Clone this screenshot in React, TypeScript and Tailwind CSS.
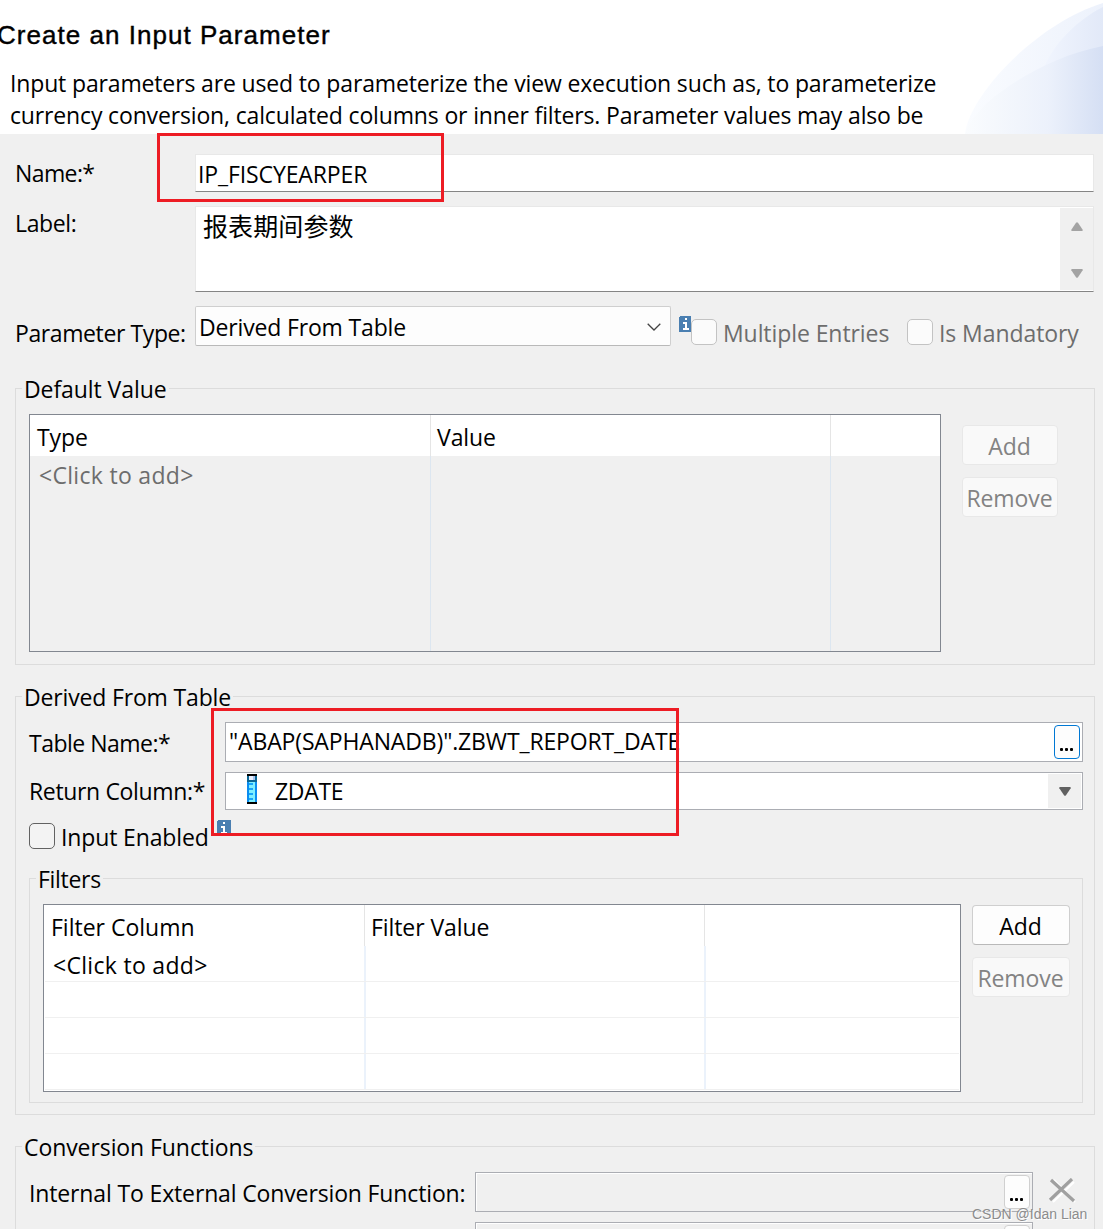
import type { ReactNode } from "react";

interface ChildrenProps {
	children?: ReactNode;
	className?: string;
}

function Text({ children, className = "" }: ChildrenProps) {
	return (
		<span className={`block whitespace-nowrap leading-[30px] ${className}`}>
			{children}
		</span>
	);
}

interface GroupProps {
	title: string;
	legendClass?: string;
	className?: string;
	children: ReactNode;
}

function Group({
	title,
	legendClass = "ml-[6px]",
	className = "",
	children,
}: GroupProps) {
	return (
		<fieldset className={`min-w-0 border border-[#dcdcdc] ${className}`}>
			<legend className={`h-[33px] px-[2px] pt-[2px] ${legendClass}`}>
				<Text>{title}</Text>
			</legend>
			{children}
		</fieldset>
	);
}

function Checkbox({ disabled = false }: { disabled?: boolean }) {
	return (
		<span
			className={`block h-[26px] w-[26px] shrink-0 rounded-[5px] border ${
				disabled
					? "border-[#c3c3c3] bg-[#fbfbfb]"
					: "border-[#626262] bg-[#f3f3f3]"
			}`}
		/>
	);
}

function InfoIcon({ className = "" }: { className?: string }) {
	return (
		<div className={`h-4 shrink-0 overflow-hidden ${className}`}>
			<svg
				viewBox="0 0 14 16"
				className="h-4 w-[14px] max-w-none"
				shapeRendering="crispEdges"
			>
				<rect width="14" height="16" rx="2" fill="#4a7fb1" />
				<path d="M6 2h2v2H6zM4 6h4v6h2v2H4v-2h2V8H4z" fill="#fff" />
			</svg>
		</div>
	);
}

function ColumnIcon() {
	return (
		<svg
			viewBox="0 0 10 30"
			className="h-[30px] w-[10px]"
			shapeRendering="crispEdges"
		>
			<rect width="10" height="30" fill="#0a8df0" />
			<rect width="10" height="2" fill="#000" />
			<rect y="2" width="10" height="6" fill="#0b6694" />
			<rect x="2" y="2" width="4" height="4" fill="#e8f0ff" />
			<rect x="6" y="2" width="2" height="4" fill="#a9c4f0" />
			<rect x="2" y="8" width="6" height="20" fill="#7fefff" />
			<path
				d="M2 9h4v2H2zM2 14h4v2H2zM2 19h4v2H2zM2 24h4v2H2z"
				fill="#18a4fa"
			/>
			<rect y="28" width="10" height="2" fill="#000" />
		</svg>
	);
}

function Arrow({ up = false }: { up?: boolean }) {
	return (
		<svg viewBox="0 0 12 9" className="h-[9px] w-3">
			<path
				d={
					up
						? "M1 9Q0 9 .3 7.7L5 .8Q6-.4 7 .8L11.7 7.7Q12 9 11 9z"
						: "M1 0Q0 0 .3 1.3L5 8.2Q6 9.4 7 8.2L11.7 1.3Q12 0 11 0z"
				}
				fill="currentColor"
			/>
		</svg>
	);
}

function Button({
	children,
	disabled = false,
}: ChildrenProps & { disabled?: boolean }) {
	return (
		<button
			type="button"
			className={`flex h-10 items-center justify-center rounded border pr-px pt-px ${
				disabled
					? "border-[#e8e8e8] bg-[#f9f9f9] text-[#838383]"
					: "border-[#cfcfcf] border-b-[#b9b9b9] bg-[#fdfdfd] text-black"
			}`}
		>
			<Text>{children}</Text>
		</button>
	);
}

function Dots({ className }: { className: string }) {
	return (
		<button
			type="button"
			className={`flex h-[34px] w-[26px] items-end justify-center gap-[2px] rounded-[4px] border bg-[#fdfdfd] pb-[7px] pr-px ${className}`}
		>
			<i className="h-[3px] w-[3px] rounded-[1px] bg-black" />
			<i className="h-[3px] w-[3px] rounded-[1px] bg-black" />
			<i className="h-[3px] w-[3px] rounded-[1px] bg-black" />
		</button>
	);
}

function Header() {
	return (
		<header className="flex h-[134px] justify-between bg-white">
			<div>
				<h1 className="-ml-[3px] mt-[19px] h-8 whitespace-nowrap font-['Liberation_Sans',sans-serif] text-[26px] leading-8 tracking-[1.03px] [-webkit-text-stroke:0.4px_black]">
					Create an Input Parameter
				</h1>
				<div className="ml-[10px] mt-[17px] flex flex-col gap-[2px] tracking-[-0.15px]">
					<Text>
						Input parameters are used to parameterize the view execution such as,
						to parameterize
					</Text>
					<Text>
						currency conversion, calculated columns or inner filters. Parameter
						values may also be
					</Text>
				</div>
			</div>
			<svg viewBox="0 0 138 134" className="h-[134px] w-[138px] shrink-0">
				<defs>
					<linearGradient id="sky" x1="0" x2="1">
						<stop offset="0" stopColor="#fafcff" />
						<stop offset="1" stopColor="#edf2fc" />
					</linearGradient>
					<linearGradient id="mid" x1="0" x2="1">
						<stop offset="0" stopColor="#f1f5fe" />
						<stop offset="1" stopColor="#e2e9f8" />
					</linearGradient>
					<linearGradient id="low" x1="0" x2="1">
						<stop offset="0" stopColor="#fafcfe" />
						<stop offset="0.6" stopColor="#ecf1fb" />
						<stop offset="1" stopColor="#d5dff4" />
					</linearGradient>
				</defs>
				<path d="M0 134C4 96 70 24 138 3V134z" fill="url(#sky)" />
				<path d="M78 70C88 44 112 20 138 7V70z" fill="url(#mid)" />
				<path d="M0 134Q3 122 22 103C50 79 92 55 138 46V134z" fill="url(#low)" />
			</svg>
		</header>
	);
}

function DefaultValueTable() {
	return (
		<div className="h-[238px] w-[912px] border border-[#828790]">
			<div className="grid h-[41px] grid-cols-[401px_400px_1fr] bg-white">
				<div className="border-r border-[#e5e5e5] pl-[7px] pt-[7px]">
					<Text>Type</Text>
				</div>
				<div className="border-r border-[#e5e5e5] pl-[6px] pt-[7px]">
					<Text>Value</Text>
				</div>
				<div />
			</div>
			<div className="grid h-[195px] grid-cols-[401px_400px_1fr]">
				<div className="border-r border-[#dce6f0] pl-[9px] pt-[4px] text-[#6d6d6d]">
					<Text className="tracking-[0.3px]">&lt;Click to add&gt;</Text>
				</div>
				<div className="border-r border-[#dce6f0]" />
				<div />
			</div>
		</div>
	);
}

const filterRows = ["<Click to add>", "", "", ""];

function FilterTable() {
	return (
		<div className="h-[188px] w-[918px] border border-[#828790] bg-white">
			<div className="grid h-[41px] grid-cols-[321px_340px_1fr]">
				<div className="border-r border-[#e5e5e5] pl-[7px] pt-[7px]">
					<Text className="tracking-normal">Filter Column</Text>
				</div>
				<div className="border-r border-[#e5e5e5] pl-[6px] pt-[7px]">
					<Text>Filter Value</Text>
				</div>
				<div />
			</div>
			{filterRows.map((row, i) => (
				<div
					key={i}
					className="mx-px grid h-9 grid-cols-[321px_340px_1fr] border-b border-[#f0f0f0]"
				>
					<div className="border-r-2 border-[#ebf2fb] pl-[8px] pt-[4px]">
						<Text className="tracking-[0.3px]">{row}</Text>
					</div>
					<div className="border-r-2 border-[#ebf2fb]" />
					<div />
				</div>
			))}
		</div>
	);
}

export default function App() {
	return (
		<div className="relative h-[1229px] w-[1103px] overflow-hidden bg-[#f0f0f0] font-['Open_Sans','Noto_Sans_CJK_SC',sans-serif] text-[23px] tracking-[-0.08px] text-black">
			<Header />

			<main className="pl-[15px] pr-[8px]">
				<div className="flex pt-5">
					<Text className="w-[180px] pt-1 tracking-[-0.6px]">Name:*</Text>
					<div className="h-[38px] w-[899px] border border-[#e8e8e8] border-b-[#858585] bg-white pl-[2px] pt-[4px]">
						<Text className="tracking-[-0.12px]">IP_FISCYEARPER</Text>
					</div>
				</div>

				<div className="mt-[14px] flex">
					<Text className="w-[180px] pt-[2px] tracking-[-0.35px]">Label:</Text>
					<div className="flex h-[86px] w-[899px] justify-between border border-[#e8e8e8] border-b-[#858585] bg-white py-px pl-[7px]">
						<Text className="pt-[2px] font-['Noto_Sans_CJK_SC',sans-serif] text-[25px] tracking-[0.1px]">
							报表期间参数
						</Text>
						<div className="flex w-[33px] flex-col items-center justify-between bg-[#f0f0f0] pb-[12px] pt-[14px] text-[#a3a3a3]">
							<Arrow up />
							<Arrow />
						</div>
					</div>
				</div>

				<div className="mt-[14px] flex h-10">
					<Text className="w-[180px] pt-3 tracking-[-0.4px]">
						Parameter Type:
					</Text>
					<div className="flex w-[476px] justify-between rounded-[2px] border border-[#cfcfcf] border-b-[#b9b9b9] bg-[#fdfdfd] pl-[3px] pr-[9px] pt-[5px]">
						<Text className="tracking-[-0.16px]">Derived From Table</Text>
						<svg
							viewBox="0 0 14 8"
							className="mt-[11px] h-2 w-[14px]"
							fill="none"
							stroke="#444"
							strokeWidth="1.3"
						>
							<path d="M.7.8 7 7 13.3.8" />
						</svg>
					</div>
					<InfoIcon className="ml-[8px] mt-[10px] w-3" />
					<div className="flex pt-[13px] text-[#6d6d6d]">
						<Checkbox disabled />
						<Text className="-mt-px ml-[6px] w-[184px]">Multiple Entries</Text>
						<Checkbox disabled />
						<Text className="-mt-px ml-[6px]">Is Mandatory</Text>
					</div>
				</div>

				<Group title="Default Value" className="mt-[26px] h-[293px] w-[1080px]">
					<div className="flex gap-[21px] pl-[13px] pt-[9px]">
						<DefaultValueTable />
						<div className="flex w-24 flex-col gap-3 pt-[11px]">
							<Button disabled>Add</Button>
							<Button disabled>Remove</Button>
						</div>
					</div>
				</Group>

				<Group
					title="Derived From Table"
					legendClass="-ml-[7px] tracking-[-0.16px]"
					className="mt-[15px] h-[435px] w-[1080px] pl-[13px]"
				>
					<div className="flex pt-[9px]">
						<Text className="w-[196px] pt-[6px] tracking-[-0.5px]">
							Table Name:*
						</Text>
						<div className="flex h-10 w-[858px] justify-between border border-[#abadb3] bg-white pl-[3px] pr-[2px] pt-[2px]">
							<Text className="pt-px tracking-[-0.14px]">
								&quot;ABAP(SAPHANADB)&quot;.ZBWT_REPORT_DATE
							</Text>
							<Dots className="border-[#0078d4]" />
						</div>
					</div>
					<div className="mt-[10px] flex">
						<Text className="w-[196px] pt-1 tracking-[-0.35px]">
							Return Column:*
						</Text>
						<div className="flex h-[38px] w-[858px] border border-[#abadb3] bg-white p-px pl-[21px]">
							<ColumnIcon />
							<Text className="ml-[18px] mt-[2px] flex-1 tracking-[-0.3px]">
								ZDATE
							</Text>
							<div className="flex w-[33px] items-center justify-center bg-[#f0f0f0] text-[#606060]">
								<Arrow />
							</div>
						</div>
					</div>
					<div className="flex h-[52px] pt-[13px]">
						<Checkbox />
						<Text className="-mt-px ml-[6px] w-[156px] tracking-[-0.14px]">
							Input Enabled
						</Text>
						<InfoIcon className="-mt-[3px] w-[14px]" />
					</div>

					<Group
						title="Filters"
						legendClass="ml-[6px] tracking-[-0.3px]"
						className="h-[241px] w-[1054px]"
					>
						<div className="flex gap-[11px] pl-[13px] pt-[9px]">
							<FilterTable />
							<div className="flex w-[98px] flex-col gap-3 pt-px">
								<Button>Add</Button>
								<Button disabled>Remove</Button>
							</div>
						</div>
					</Group>
				</Group>

				<Group
					title="Conversion Functions"
					legendClass="-ml-[7px]"
					className="mt-[15px] h-[200px] w-[1080px] pl-[13px]"
				>
					<div className="flex pt-[9px]">
						<Text className="w-[446px] pt-[6px] tracking-[-0.14px]">
							Internal To External Conversion Function:
						</Text>
						<div className="flex h-10 w-[558px] justify-end border border-[#abadb3] pr-[2px] pt-[2px] shadow-[inset_1px_1px_0_#fff]">
							<Dots className="border-[#d0d0d0]" />
						</div>
						<svg
							viewBox="0 0 28 26"
							className="ml-[15px] mt-[6px] h-[26px] w-7"
							fill="none"
						>
							<path d="M6 2 27 24M26 4 5 24" stroke="#fff" strokeWidth="2" />
							<path d="M3 2 26 23M24 1 2 22" stroke="#a0a0a0" strokeWidth="3.2" />
						</svg>
					</div>
					<div className="ml-[446px] mt-[10px] flex h-10 w-[558px] justify-end border border-[#abadb3] pr-[2px] pt-[2px] shadow-[inset_1px_1px_0_#fff]">
						<Dots className="border-[#d0d0d0]" />
					</div>
				</Group>
			</main>

			{/* annotation frames and watermark sit over the form */}
			<div className="absolute left-[157px] top-[133px] h-[69px] w-[287px] border-[3px] border-[#ed1c24]" />
			<div className="absolute left-[211px] top-[708px] h-[128px] w-[468px] border-[3px] border-[#ed1c24]" />
			<span className="absolute left-[972px] top-[1205px] whitespace-nowrap font-['Liberation_Sans',sans-serif] text-sm leading-[18px] tracking-normal text-[#8c8c8c] [text-shadow:1px_1px_0_#fff]">
				CSDN @Idan Lian
			</span>
		</div>
	);
}
